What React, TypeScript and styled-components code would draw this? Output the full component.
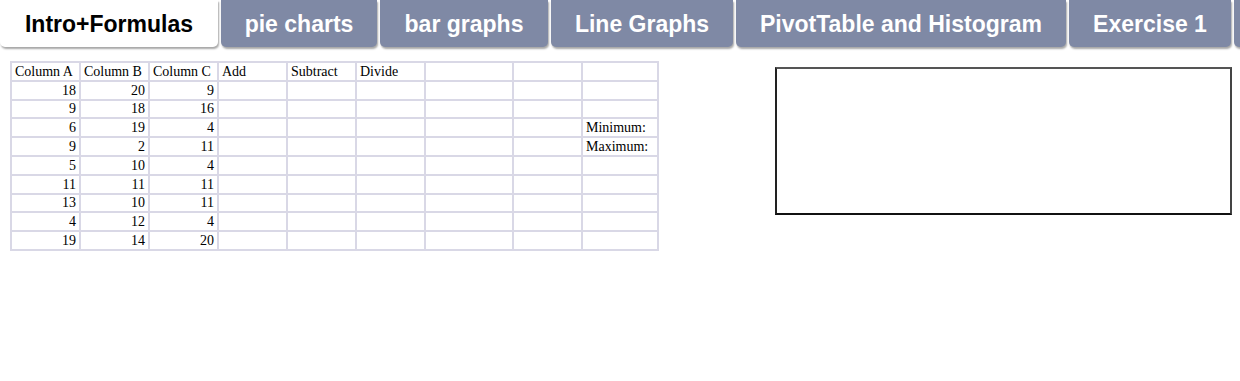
import React from "react";
import styled, { createGlobalStyle } from "styled-components";

const Global = createGlobalStyle`
  html, body { margin: 0; padding: 0; background: #fff; }
  body { width: 1240px; height: 381px; overflow: hidden; }
`;

const Page = styled.div`
  width: 1240px;
  height: 381px;
  display: flex;
  flex-direction: column;
`;

const TabBar = styled.div`
  display: flex;
  gap: 3px;
  height: 47px;
  overflow: visible;
`;

const Tab = styled.div<{ $active?: boolean; $w: number }>`
  flex: 0 0 ${(p) => p.$w}px;
  height: 47px;
  box-sizing: border-box;
  display: flex;
  align-items: center;
  justify-content: center;
  padding-top: 1px;
  font-family: "Liberation Sans", Arial, sans-serif;
  font-weight: bold;
  font-size: 23px;
  border-radius: 0 0 5px 5px;
  background: ${(p) => (p.$active ? "#ffffff" : "#7f89a5")};
  color: ${(p) => (p.$active ? "#000000" : "#ffffff")};
  box-shadow: 1px 2px 2px rgba(0, 0, 0, 0.35);
  white-space: nowrap;
`;

const Content = styled.div`
  display: flex;
  align-items: flex-start;
  padding: 14px 0 0 10px;
`;

const Sheet = styled.table`
  border-collapse: collapse;
  table-layout: fixed;
  font-family: "Liberation Serif", "Times New Roman", serif;
  font-size: 14px;
  color: #000;
  border: 2px solid #d9d8e6;
`;

const Row = styled.tr`
  height: 18.8px;
`;

const Cell = styled.td<{ $num?: boolean }>`
  border: 2px solid #d9d8e6;
  padding: 0 3px;
  line-height: 15px;
  text-align: ${(p) => (p.$num ? "right" : "left")};
  white-space: nowrap;
  overflow: hidden;
  vertical-align: middle;
`;

const ChartBox = styled.div`
  margin-left: 116px;
  margin-top: 6px;
  width: 457px;
  height: 148px;
  box-sizing: border-box;
  border: 2px solid #222;
  border-top-color: #555;
  border-right-color: #444;
  border-bottom-color: #111;
`;

const tabs = [
  { label: "Intro+Formulas", w: 218, active: true },
  { label: "pie charts", w: 156 },
  { label: "bar graphs", w: 168 },
  { label: "Line Graphs", w: 182 },
  { label: "PivotTable and Histogram", w: 330 },
  { label: "Exercise 1", w: 162 },
  { label: "", w: 40 },
];

const widths = [69, 69, 69, 69, 69, 69, 88, 69, 76];
const headers = ["Column A", "Column B", "Column C", "Add", "Subtract", "Divide", "", "", ""];
const data = [
  [18, 20, 9],
  [9, 18, 16],
  [6, 19, 4],
  [9, 2, 11],
  [5, 10, 4],
  [11, 11, 11],
  [13, 10, 11],
  [4, 12, 4],
  [19, 14, 20],
];
const side: Record<number, string> = { 2: "Minimum:", 3: "Maximum:" };

export default function App() {
  return (
    <Page>
      <Global />
      <TabBar>
        {tabs.map((t, i) => (
          <Tab key={i} $active={t.active} $w={t.w}>
            {t.label}
          </Tab>
        ))}
      </TabBar>
      <Content>
        <Sheet>
          <colgroup>
            {widths.map((w, i) => (
              <col key={i} style={{ width: w }} />
            ))}
          </colgroup>
          <tbody>
            <Row>
              {headers.map((h, i) => (
                <Cell key={i}>{h}</Cell>
              ))}
            </Row>
            {data.map((row, r) => (
              <Row key={r}>
                {row.map((v, c) => (
                  <Cell key={c} $num>
                    {v}
                  </Cell>
                ))}
                <Cell />
                <Cell />
                <Cell />
                <Cell />
                <Cell />
                <Cell>{side[r] ?? ""}</Cell>
              </Row>
            ))}
          </tbody>
        </Sheet>
        <ChartBox />
      </Content>
    </Page>
  );
}
